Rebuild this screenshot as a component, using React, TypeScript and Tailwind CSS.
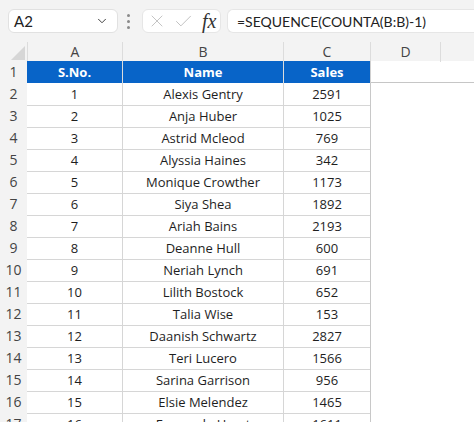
import { ChevronDown, X, Check } from 'lucide-react';

const rows: [string, string, string][] = [
  ['1', 'Alexis Gentry', '2591'],
  ['2', 'Anja Huber', '1025'],
  ['3', 'Astrid Mcleod', '769'],
  ['4', 'Alyssia Haines', '342'],
  ['5', 'Monique Crowther', '1173'],
  ['6', 'Siya Shea', '1892'],
  ['7', 'Ariah Bains', '2193'],
  ['8', 'Deanne Hull', '600'],
  ['9', 'Neriah Lynch', '691'],
  ['10', 'Lilith Bostock', '652'],
  ['11', 'Talia Wise', '153'],
  ['12', 'Daanish Schwartz', '2827'],
  ['13', 'Teri Lucero', '1566'],
  ['14', 'Sarina Garrison', '956'],
  ['15', 'Elsie Melendez', '1465'],
  ['16', 'Fernanda Hurst', '1611'],
];

const cols = 'grid grid-cols-[27px_95px_161px_87px_70px_1fr]';

function FormulaBar() {
  return (
    <div className="flex h-[42px] items-start bg-[#f3f3f3] pl-2 pt-[9px] font-['Lato',sans-serif]">
      <div className="flex h-6 w-[110px] items-center justify-between rounded-md border border-[#e1e1e1] bg-white pl-[5px] pr-2 text-[15px] text-[#222]">
        <span>A2</span>
        <ChevronDown size={14} strokeWidth={1.6} className="text-[#333]" />
      </div>
      <div className="ml-[9px] mr-[12px] flex h-6 flex-col items-center justify-center gap-[3px]">
        <span className="h-[3px] w-[3px] rounded-full bg-[#8a8a8a]" />
        <span className="h-[3px] w-[3px] rounded-full bg-[#8a8a8a]" />
        <span className="h-[3px] w-[3px] rounded-full bg-[#8a8a8a]" />
      </div>
      <div className="flex h-6 w-[79px] items-center rounded-md border border-[#e6e6e6] bg-white pl-[4px]">
        <X size={20} strokeWidth={1} className="text-[#b8b8b8]" />
        <Check size={21} strokeWidth={1} className="ml-[6px] text-[#b8b8b8]" />
        <span className="ml-[8px] font-['Liberation_Serif',serif] text-[20px] italic leading-none text-[#333]">
          fx
        </span>
      </div>
      <div className="ml-[6px] flex h-6 flex-1 items-center rounded-l-md border border-r-0 border-[#e6e6e6] bg-white pl-[9px] text-[14px] text-[#222]">
        =SEQUENCE(COUNTA(B:B)-1)
      </div>
    </div>
  );
}

function ColumnHeaders() {
  const letters = ['A', 'B', 'C', 'D', ''];
  return (
    <div className={`${cols} h-[19px] bg-[#f3f3f3] text-[14px] leading-[20px] text-[#444]`}>
      <div className="relative">
        <svg className="absolute bottom-[2px] right-[2px]" width="14" height="14" viewBox="0 0 14 14">
          <polygon points="14,0 14,14 0,14" fill="#d6d6d6" />
        </svg>
      </div>
      {letters.map((l, i) => (
        <div key={i} className="border-l border-[#dcdcdc] text-center">
          {l}
        </div>
      ))}
    </div>
  );
}

export default function App() {
  return (
    <div className="h-[422px] w-[474px] overflow-hidden bg-white font-['Open_Sans',sans-serif]">
      <FormulaBar />
      <ColumnHeaders />
      <div className={`${cols} h-[22px] border-b border-[#c6c6c6] text-[13px] leading-[22px]`}>
        <div className="bg-[#f3f3f3] text-center text-[14px] text-[#444]">1</div>
        <div className="bg-[#0864c8] text-center font-bold text-white">S.No.</div>
        <div className="border-l border-[#dcdcdc] bg-[#0864c8] text-center font-bold text-white">Name</div>
        <div className="border-l border-[#dcdcdc] bg-[#0864c8] text-center font-bold text-white">Sales</div>
        <div className="border-l border-[#d0d0d0]" />
        <div />
      </div>
      {rows.map(([n, name, sales], i) => (
        <div key={n} className={`${cols} h-[22px] text-[13px] leading-[22px] text-[#1e1e1e]`}>
          <div className="border-b border-[#e4e4e4] bg-[#f3f3f3] text-center text-[14px] text-[#444]">{i + 2}</div>
          <div className="border-b border-[#d6d6d6] text-center">{n}</div>
          <div className="border-b border-l border-[#d6d6d6] text-center">{name}</div>
          <div className="border-b border-l border-[#d6d6d6] text-center">{sales}</div>
          <div className="border-l border-[#c8c8c8]" />
          <div />
        </div>
      ))}
    </div>
  );
}
